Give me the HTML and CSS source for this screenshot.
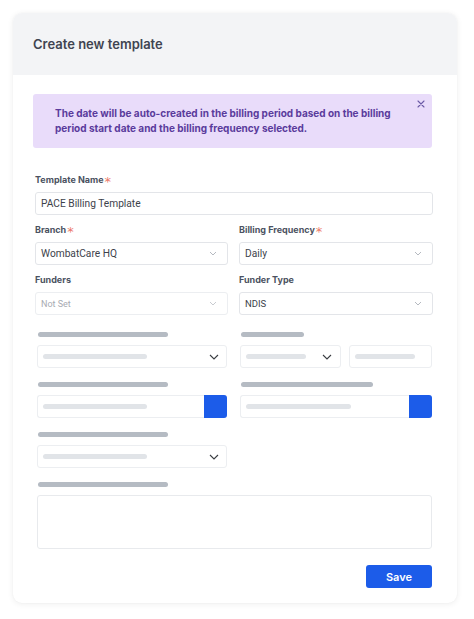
FILE: index.html
```html
<!DOCTYPE html>
<html lang="en">
<head>
<meta charset="utf-8">
<title>Create new template</title>
<link rel="stylesheet" href="styles.css">
</head>
<body>
<div class="card">
  <div class="card-header">
    <h1 class="title">Create new template</h1>
  </div>
  <div class="card-body">
    <div class="alert">
      <p class="alert-text">The date will be auto-created in the billing period based on the billing period start date and the billing frequency selected.</p>
      <span class="alert-close">
        <svg width="8" height="8" viewBox="0 0 8 8"><path d="M1 1L7 7M7 1L1 7" stroke="#6b5aa6" stroke-width="1.1" stroke-linecap="round"/></svg>
      </span>
    </div>

    <div class="form">
      <div class="field">
        <label class="label">Template Name<span class="req">*</span></label>
        <div class="input"><span class="value">PACE Billing Template</span></div>
      </div>
      <div class="row">
        <div class="field">
          <label class="label">Branch<span class="req">*</span></label>
          <div class="input select"><span class="value">WombatCare HQ</span>
            <svg class="chev" width="8" height="5" viewBox="0 0 8 5"><path d="M1 1L4 4L7 1" fill="none" stroke="#b5b9c0" stroke-width="1"/></svg>
          </div>
        </div>
        <div class="field">
          <label class="label">Billing Frequency<span class="req">*</span></label>
          <div class="input select"><span class="value">Daily</span>
            <svg class="chev" width="8" height="5" viewBox="0 0 8 5"><path d="M1 1L4 4L7 1" fill="none" stroke="#b5b9c0" stroke-width="1"/></svg>
          </div>
        </div>
      </div>
      <div class="row">
        <div class="field">
          <label class="label">Funders</label>
          <div class="input select disabled"><span class="value muted">Not Set</span>
            <svg class="chev" width="8" height="5" viewBox="0 0 8 5"><path d="M1 1L4 4L7 1" fill="none" stroke="#c8cbd0" stroke-width="1"/></svg>
          </div>
        </div>
        <div class="field">
          <label class="label">Funder Type</label>
          <div class="input select"><span class="value small">NDIS</span>
            <svg class="chev" width="8" height="5" viewBox="0 0 8 5"><path d="M1 1L4 4L7 1" fill="none" stroke="#b5b9c0" stroke-width="1"/></svg>
          </div>
        </div>
      </div>
    </div>

    <div class="skeleton">
      <div class="sk-row">
        <div class="sk-field">
          <div class="sk-label w130"></div>
          <div class="sk-input"><div class="sk-bar w104"></div>
            <svg class="sk-chev" width="10" height="6" viewBox="0 0 10 6"><path d="M1 1L5 5L9 1" fill="none" stroke="#3a3d42" stroke-width="1.1"/></svg>
          </div>
        </div>
        <div class="sk-field">
          <div class="sk-label w63"></div>
          <div class="sk-pair">
            <div class="sk-input grow"><div class="sk-bar w60"></div>
              <svg class="sk-chev" width="10" height="6" viewBox="0 0 10 6"><path d="M1 1L5 5L9 1" fill="none" stroke="#3a3d42" stroke-width="1.1"/></svg>
            </div>
            <div class="sk-input small"><div class="sk-bar w60"></div></div>
          </div>
        </div>
      </div>
      <div class="sk-row">
        <div class="sk-field">
          <div class="sk-label w130"></div>
          <div class="sk-input addon"><div class="sk-bar w104"></div><span class="sk-btn"></span></div>
        </div>
        <div class="sk-field">
          <div class="sk-label w132"></div>
          <div class="sk-input addon"><div class="sk-bar w105"></div><span class="sk-btn"></span></div>
        </div>
      </div>
      <div class="sk-row">
        <div class="sk-field">
          <div class="sk-label w130"></div>
          <div class="sk-input"><div class="sk-bar w104"></div>
            <svg class="sk-chev" width="10" height="6" viewBox="0 0 10 6"><path d="M1 1L5 5L9 1" fill="none" stroke="#3a3d42" stroke-width="1.1"/></svg>
          </div>
        </div>
        <div class="sk-field"></div>
      </div>
      <div class="sk-full">
        <div class="sk-label w130"></div>
        <div class="sk-textarea"></div>
      </div>
    </div>

    <div class="actions">
      <button class="btn-save" type="button">Save</button>
    </div>
  </div>
</div>
</body>
</html>
```

FILE: styles.css
```css
* { box-sizing: border-box; }

html, body {
  margin: 0;
  padding: 0;
  background: #ffffff;
}

body {
  font-family: Inter, "Noto Sans", sans-serif;
  padding: 13px 17px 16px 13px;
}

.card {
  width: 444px;
  height: 590px;
  background: #ffffff;
  border-radius: 9px;
  box-shadow: 0 1px 6px rgba(0, 0, 0, 0.07), 0 0 2px rgba(0, 0, 0, 0.04);
  overflow: hidden;
  display: flex;
  flex-direction: column;
}

.card-header {
  height: 62px;
  background: #f3f4f6;
  padding: 0 20px;
  display: flex;
  align-items: center;
}

.title {
  margin: 0;
  font-size: 13px;
  font-weight: 600;
  color: #3f4451;
  letter-spacing: 0;
}

.card-body {
  padding: 19px 25px 15px 20px;
  display: flex;
  flex-direction: column;
  flex: 1;
}

.alert {
  position: relative;
  background: #e9dcfa;
  border-radius: 3px;
  height: 54px;
  padding: 12px 30px 0 22px;
}

.alert-text {
  margin: 0;
  font-size: 10px;
  font-weight: 700;
  line-height: 15px;
  color: #5a3b9c;
}

.alert-close {
  position: absolute;
  right: 7px;
  top: 6px;
  width: 8px;
  height: 8px;
  display: flex;
}

.form {
  margin-top: 26px;
  padding-left: 2px;
  margin-right: -1px;
  display: flex;
  flex-direction: column;
  gap: 9px;
}

.row {
  display: grid;
  grid-template-columns: 193px 194px;
  column-gap: 11px;
}

.field {
  display: flex;
  flex-direction: column;
}

.label {
  display: flex;
  align-items: center;
  height: 12px;
  line-height: 12px;
  margin-bottom: 6px;
  font-size: 9px;
  font-weight: 700;
  color: #4b5261;
}

.req {
  font-family: "DejaVu Sans", sans-serif;
  color: #ec7a6a;
  font-size: 13px;
  font-weight: 400;
  margin-left: 1px;
  line-height: 12px;
  position: relative;
  top: 2px;
}

.input {
  height: 23px;
  border: 1px solid #e3e5e9;
  border-radius: 3px;
  background: #fff;
  display: flex;
  align-items: center;
  padding: 0 10px 0 5px;
  justify-content: space-between;
}

.value {
  font-family: Roboto, "Noto Sans", sans-serif;
  font-size: 10.2px;
  color: #3d424b;
}

.value.small {
  font-size: 9.5px;
}

.value.muted {
  font-size: 9px;
  color: #a7abb2;
}

.disabled {
  border-color: #eceef1;
}

.chev {
  display: block;
}

.skeleton {
  margin-top: 17px;
  padding-left: 4px;
  display: flex;
  flex-direction: column;
  gap: 14px;
}

.sk-row {
  display: grid;
  grid-template-columns: 190px 192px;
  column-gap: 13px;
}

.sk-field, .sk-full {
  display: flex;
  flex-direction: column;
}

.sk-label {
  height: 5px;
  border-radius: 3px;
  background: #b5bbc3;
  margin-bottom: 8px;
  margin-left: 1px;
}

.w130 { width: 130px; }
.w63 { width: 63px; }
.w132 { width: 132px; }
.w104 { width: 104px; }
.w105 { width: 105px; }
.w60 { width: 60px; }

.sk-input {
  height: 23px;
  border: 1px solid #eceef1;
  border-radius: 3px;
  background: #fff;
  display: flex;
  align-items: center;
  justify-content: space-between;
  padding: 0 7px 0 5px;
}

.sk-bar {
  height: 5px;
  border-radius: 3px;
  background: #e1e4e8;
}

.sk-pair {
  display: flex;
  gap: 8px;
}

.sk-input.grow {
  flex: 1;
  padding-right: 8px;
}

.sk-input.small {
  width: 83px;
  flex: none;
}

.sk-input.addon {
  padding-right: 0;
  border-right: none;
}

.sk-btn {
  width: 23px;
  height: 23px;
  margin-top: -1px;
  margin-bottom: -1px;
  background: #1c5ce9;
  border-radius: 0 3px 3px 0;
  align-self: center;
}

.sk-textarea {
  height: 54px;
  border: 1px solid #e8eaed;
  border-radius: 3px;
}

.actions {
  margin-top: auto;
  display: flex;
  justify-content: flex-end;
}

.btn-save {
  width: 66px;
  height: 23px;
  border: none;
  border-radius: 3px;
  background: #1c5ce9;
  color: #ffffff;
  font-family: Inter, "Noto Sans", sans-serif;
  font-size: 11px;
  font-weight: 600;
  padding: 0;
  margin-right: 0;
}
```
